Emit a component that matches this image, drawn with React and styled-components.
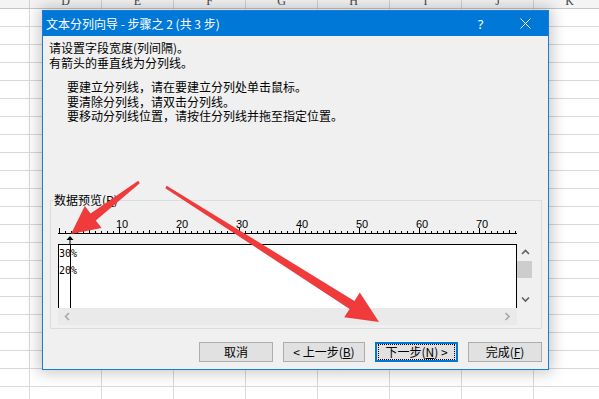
import React from "react";
import styled, { createGlobalStyle } from "styled-components";

const Global = createGlobalStyle`
  html, body { margin: 0; padding: 0; }
  body {
    width: 599px;
    height: 399px;
    overflow: hidden;
    background: #fff;
    font-family: "Noto Sans CJK SC", "Noto Sans", sans-serif;
  }
  #root { width: 599px; height: 399px; }
`;

const Page = styled.div`
  position: relative;
  width: 599px;
  height: 399px;
  overflow: hidden;
  background: #fff;
`;

const Sheet = styled.div`
  display: flex;
  flex-direction: column;
  height: 100%;
`;

const HeaderRow = styled.div`
  display: flex;
  height: 8px;
  flex: 0 0 8px;
  border-bottom: 1px solid #c6c6c6;
  background: #f4f4f4;
  overflow: hidden;
`;

const HeaderCell = styled.div`
  flex: 0 0 ${(p) => p.$w}px;
  box-sizing: border-box;
  border-right: 1px solid #d2d2d2;
  text-align: center;
  font: 12px/8px "Liberation Serif", serif;
  color: #444;
  overflow: hidden;
`;

const HeaderLetter = styled.span`
  display: block;
  transform: translateY(-3px);
`;

const GridArea = styled.div`
  flex: 1;
  background-image:
    linear-gradient(to right, transparent 71px, #d9d9d9 71px, #d9d9d9 72px),
    linear-gradient(to bottom, transparent 17px, #d9d9d9 17px, #d9d9d9 18px);
  background-size: 72px 100%, 100% 18px;
  background-position: -42px 0, 0 0;
`;

const Dialog = styled.div`
  position: absolute;
  left: 42px;
  top: 10px;
  width: 507px;
  height: 360px;
  box-sizing: border-box;
  border: 1px solid #1a7dd3;
  background: #f0f0f0;
  box-shadow: 0 0 14px 3px rgba(0, 0, 0, 0.22);
  display: flex;
  flex-direction: column;
  font-family: "Noto Sans CJK SC", sans-serif;
  color: #000;
`;

const TitleBar = styled.div`
  height: 25px;
  flex: 0 0 25px;
  background: #0078d7;
  color: #fff;
  display: flex;
  align-items: center;
  padding-left: 3px;
  font-size: 12px;
`;

const TitleText = styled.span`
  white-space: nowrap;
`;

const TitleButtons = styled.div`
  margin-left: auto;
  display: flex;
  height: 100%;
`;

const TitleButton = styled.span`
  width: 45px;
  height: 100%;
  display: flex;
  align-items: center;
  justify-content: center;
  font: 13px "Noto Sans", sans-serif;
`;

const Body = styled.div`
  flex: 1;
  display: flex;
  flex-direction: column;
  padding: 4px 6px 7px 6px;
`;

const Para = styled.p`
  margin: 0;
  font-size: 12px;
  line-height: 15px;
  white-space: nowrap;
`;

const IndentPara = styled.p`
  margin: 10px 0 0 18px;
  font-size: 12px;
  line-height: 14.5px;
  white-space: nowrap;
`;

const Group = styled.fieldset`
  margin: 68.5px 0 0 1px;
  width: 492px;
  box-sizing: border-box;
  border: 1px solid #dcdcdc;
  padding: 8px 0 3px 7px;
  min-width: 0;
`;

const Legend = styled.legend`
  font-size: 12px;
  line-height: 16px;
  padding: 0 1px;
  margin-left: -5px;
  color: #000;
`;

const Ruler = styled.svg`
  display: block;
`;

const DataRow = styled.div`
  display: flex;
  height: 64px;
`;

const DataBox = styled.div`
  position: relative;
  width: 459px;
  box-sizing: border-box;
  border: 1px solid #000;
  border-bottom: none;
  background: #fff;
  font: 10px/17px "DejaVu Sans Mono", monospace;
  color: #000;
  overflow: hidden;
`;

const BreakLine = styled.div`
  position: absolute;
  left: 11px;
  top: 0;
  bottom: 0;
  width: 1px;
  background: #000;
`;

const VScroll = styled.div`
  width: 16px;
  display: flex;
  flex-direction: column;
  background: #f0f0f0;
`;

const ScrollButton = styled.div`
  height: 17px;
  display: flex;
  align-items: center;
  justify-content: center;
`;

const Thumb = styled.div`
  height: 17px;
  width: 15px;
  background: #cdcdcd;
`;

const Spacer = styled.div`
  flex: 1;
`;

const HRow = styled.div`
  display: flex;
  height: 17px;
`;

const HScroll = styled.div`
  width: 459px;
  display: flex;
  align-items: center;
  justify-content: space-between;
  padding: 0 6px;
  box-sizing: border-box;
  background: #eaeaea;
`;

const Corner = styled.div`
  width: 16px;
  background: #f0f0f0;
`;

const ButtonRow = styled.div`
  display: flex;
  justify-content: flex-end;
  gap: 10px;
  margin-top: 13px;
`;

const Button = styled.div`
  width: ${(p) => p.$w}px;
  height: 20px;
  box-sizing: border-box;
  background: #e1e1e1;
  border: ${(p) => (p.$primary ? "2px solid #0078d7" : "1px solid #adadad")};
  display: flex;
  align-items: center;
  justify-content: center;
  font-size: 12px;
  line-height: 16px;
  white-space: nowrap;
  padding: ${(p) => (p.$primary ? "0 1px" : "0")};
`;

const FocusRing = styled.span`
  flex: 1;
  height: 100%;
  box-sizing: border-box;
  border: 1px dotted #000;
  display: flex;
  align-items: center;
  justify-content: center;
`;

const Overlay = styled.svg`
  position: absolute;
  left: 0;
  top: 0;
  pointer-events: none;
`;

const Chevron = ({ dir, color }) => {
  const paths = {
    up: "M1 5 L4.5 1.5 L8 5",
    down: "M1 1.5 L4.5 5 L8 1.5",
    left: "M5 1 L1.5 4.5 L5 8",
    right: "M1.5 1 L5 4.5 L1.5 8",
  };
  const vertical = dir === "up" || dir === "down";
  return (
    <svg width={vertical ? 9 : 7} height={vertical ? 7 : 9}>
      <path d={paths[dir]} fill="none" stroke={color} strokeWidth="1.6" />
    </svg>
  );
};

function RulerDrawing() {
  const ticks = [];
  for (let i = 0; i <= 76; i++) {
    const h = i % 10 === 0 ? 5 : i % 5 === 0 ? 3 : 2;
    ticks.push(<rect key={i} x={1 + 6 * i} y={17 - h} width={1} height={h} fill="#000" />);
  }
  const labels = [];
  for (let n = 10; n <= 70; n += 10) {
    labels.push(
      <text key={n} x={1 + 6 * n - 3} y={12} fontSize="11" fontFamily="Liberation Sans, sans-serif" fill="#000">
        {n}
      </text>
    );
  }
  return (
    <Ruler width="475" height="28">
      {labels}
      <rect x="0" y="17" width="459" height="1" fill="#000" />
      {ticks}
      <polygon points="12,20 8.5,24 15.5,24" fill="#000" />
      <rect x="11.5" y="24" width="1" height="4" fill="#000" />
    </Ruler>
  );
}

function Arrows() {
  return (
    <Overlay width="599" height="399">
      <polygon
        points="139.8,183.2 95.8,220.5 101.6,228 71,234 84.8,206 90.6,213.5 138.2,180.8"
        fill="#ef3b3b"
      />
      <polygon
        points="165.3,188.2 349.6,308.9 344.2,317.3 379,322 359.8,292.5 354.4,300.9 166.7,185.8"
        fill="#ef3b3b"
      />
    </Overlay>
  );
}

const columns = ["C", "D", "E", "F", "G", "H", "I", "J", "K"];

export default function App() {
  return (
    <Page>
      <Global />
      <Sheet>
        <HeaderRow>
          {columns.map((c, i) => (
            <HeaderCell key={c} $w={i === 0 ? 30 : 72}>
              <HeaderLetter>{i === 0 ? "" : c}</HeaderLetter>
            </HeaderCell>
          ))}
        </HeaderRow>
        <GridArea />
      </Sheet>

      <Dialog>
        <TitleBar>
          <TitleText>文本分列向导 - 步骤之 2 (共 3 步)</TitleText>
          <TitleButtons>
            <TitleButton>?</TitleButton>
            <TitleButton>
              <svg width="11" height="11">
                <path d="M0.5 0.5 L10.5 10.5 M10.5 0.5 L0.5 10.5" stroke="#fff" strokeWidth="1" />
              </svg>
            </TitleButton>
          </TitleButtons>
        </TitleBar>
        <Body>
          <Para>
            请设置字段宽度(列间隔)。
            <br />
            有箭头的垂直线为分列线。
          </Para>
          <IndentPara>
            要建立分列线，请在要建立分列处单击鼠标。
            <br />
            要清除分列线，请双击分列线。
            <br />
            要移动分列线位置，请按住分列线并拖至指定位置。
          </IndentPara>
          <Group>
            <Legend>
              数据预览(<u>P</u>)
            </Legend>
            <RulerDrawing />
            <DataRow>
              <DataBox>
                30%
                <br />
                20%
                <BreakLine />
              </DataBox>
              <VScroll>
                <ScrollButton>
                  <Chevron dir="up" color="#606060" />
                </ScrollButton>
                <Thumb />
                <Spacer />
                <ScrollButton>
                  <Chevron dir="down" color="#606060" />
                </ScrollButton>
              </VScroll>
            </DataRow>
            <HRow>
              <HScroll>
                <Chevron dir="left" color="#a8a8a8" />
                <Chevron dir="right" color="#a8a8a8" />
              </HScroll>
              <Corner />
            </HRow>
          </Group>
          <ButtonRow>
            <Button $w={74}>取消</Button>
            <Button $w={82}>
              &lt; 上一步(<u>B</u>)
            </Button>
            <Button $w={83} $primary>
              <FocusRing>
                下一步(<u>N</u>) &gt;
              </FocusRing>
            </Button>
            <Button $w={74}>
              完成(<u>F</u>)
            </Button>
          </ButtonRow>
        </Body>
      </Dialog>
      <Arrows />
    </Page>
  );
}
